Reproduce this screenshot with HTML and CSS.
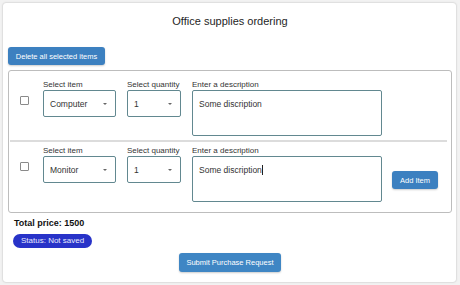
FILE: index.html
```html
<!DOCTYPE html>
<html>
<head>
<meta charset="utf-8">
<link rel="stylesheet" href="styles.css">
</head>
<body>
<div class="card">
  <h1 class="title">Office supplies ordering</h1>
  <button class="btn delete-btn">Delete all selected items</button>
  <div class="items">
    <div class="row">
      <div class="check"></div>
      <div class="field">
        <div class="label">Select item</div>
        <div class="select item-select"><span>Computer</span><span class="caret"></span></div>
      </div>
      <div class="field">
        <div class="label">Select quantity</div>
        <div class="select qty-select"><span>1</span><span class="caret"></span></div>
      </div>
      <div class="field">
        <div class="label">Enter a description</div>
        <div class="textarea">Some discription</div>
      </div>
    </div>
    <div class="divider"></div>
    <div class="row">
      <div class="check"></div>
      <div class="field">
        <div class="label">Select item</div>
        <div class="select item-select"><span>Monitor</span><span class="caret"></span></div>
      </div>
      <div class="field">
        <div class="label">Select quantity</div>
        <div class="select qty-select"><span>1</span><span class="caret"></span></div>
      </div>
      <div class="field">
        <div class="label">Enter a description</div>
        <div class="textarea">Some discription<span class="cursor"></span></div>
      </div>
      <button class="btn add-btn">Add Item</button>
    </div>
  </div>
  <div class="total">Total price: 1500</div>
  <div class="status">Status: Not saved</div>
  <button class="btn submit-btn">Submit Purchase Request</button>
</div>
</body>
</html>
```
FILE: styles.css
```css
* { box-sizing: border-box; }
body {
  margin: 0;
  background: #f2f2f2;
  font-family: "Liberation Sans", Arial, sans-serif;
  color: #222;
}
.card {
  margin: 3px;
  width: 453px;
  height: 279px;
  background: #fff;
  border-radius: 3px;
  box-shadow: 0 0 2px rgba(0,0,0,0.28);
  padding: 0 4px 0 5px;
  overflow: hidden;
}
.title {
  margin: 10px 0 0;
  font-size: 11px;
  line-height: 16px;
  font-weight: normal;
  text-align: center;
  color: #1e1e1e;
}
.btn {
  display: block;
  border: none;
  background: #3c80c0;
  color: #fff;
  font-family: "Liberation Sans", Arial, sans-serif;
  font-size: 7.5px;
  border-radius: 3px;
  padding: 0;
  box-shadow: 0 1px 2px rgba(0,0,0,0.2);
}
.delete-btn {
  margin-top: 18px;
  width: 97px;
  height: 18px;
}
.items {
  margin-top: 5px;
  width: 444px;
  border: 1px solid #bdbdbd;
  border-radius: 3px;
  padding: 5px 0 6px;
}
.row {
  display: flex;
  align-items: flex-start;
  padding: 4px 0 4px 11px;
}
.divider {
  height: 2px;
  background: #dcdcdc;
  margin: 0 4px 0 1px;
}
.check {
  width: 9px;
  height: 9px;
  border: 1px solid #8a8a8a;
  border-radius: 1px;
  margin-top: 16px;
  margin-right: 14px;
}
.field {
  display: flex;
  flex-direction: column;
  margin-right: 11px;
}
.label {
  font-size: 8px;
  line-height: 10px;
  color: #333;
  white-space: nowrap;
}
.select {
  height: 27px;
  border: 1px solid #628890;
  border-radius: 2px;
  display: flex;
  align-items: center;
  justify-content: space-between;
  padding: 0 8px 0 6px;
  font-size: 8.5px;
  color: #333;
}
.item-select { width: 73px; }
.qty-select { width: 54px; }
.caret {
  width: 0;
  height: 0;
  border-left: 2.5px solid transparent;
  border-right: 2.5px solid transparent;
  border-top: 2.5px solid #666;
}
.textarea {
  width: 190px;
  height: 46px;
  border: 1px solid #628890;
  border-radius: 2px;
  padding: 8px 6px;
  font-size: 8.5px;
  line-height: 10px;
  color: #333;
}
.cursor {
  display: inline-block;
  width: 1px;
  height: 10px;
  background: #222;
  vertical-align: -2px;
}
.add-btn {
  margin-top: 25px;
  margin-left: -1px;
  width: 46px;
  height: 18px;
}
.total {
  margin: 5px 0 0 6px;
  font-size: 9px;
  line-height: 11px;
  font-weight: bold;
  color: #111;
}
.status {
  display: inline-block;
  margin: 5px 0 0 5px;
  height: 14px;
  line-height: 14px;
  padding: 0 8px;
  border-radius: 7px;
  background: #2833c8;
  color: #e8ebff;
  font-size: 8px;
}
.submit-btn {
  margin: 5px auto 0;
  width: 102px;
  height: 19px;
  background: #3f86c4;
}
```
